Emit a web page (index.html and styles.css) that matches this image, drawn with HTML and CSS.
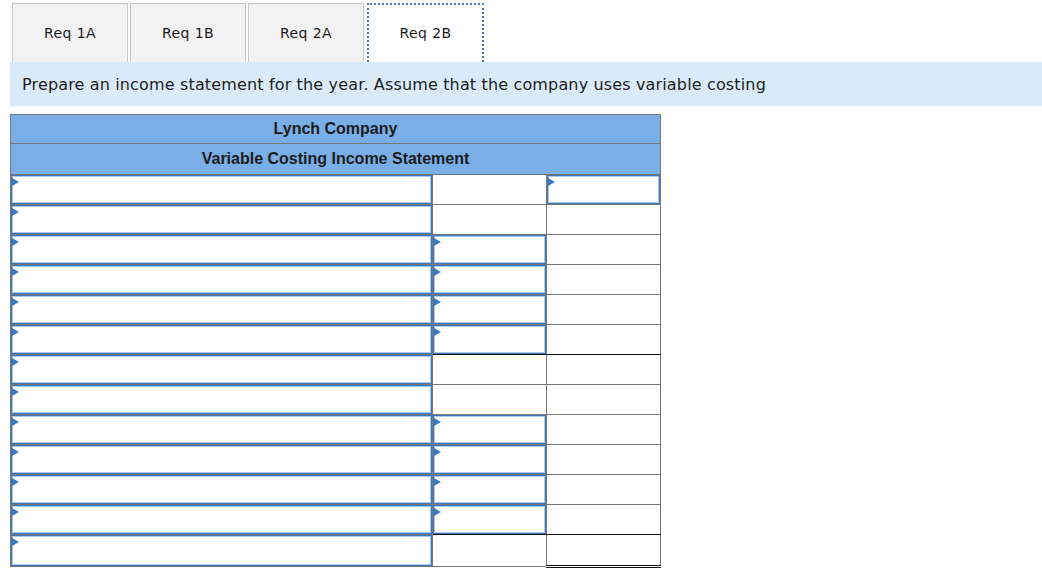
FILE: index.html
```html
<!DOCTYPE html>
<html lang="en">
<head>
  <meta charset="UTF-8">
  <title>Req 2B</title>
  <link rel="stylesheet" href="styles.css">
</head>
<body>
  <div class="tabs">
    <button class="tab">Req 1A</button>
    <button class="tab">Req 1B</button>
    <button class="tab">Req 2A</button>
    <button class="tab active">Req 2B</button>
  </div>
  <div class="prompt">Prepare an income statement for the year. Assume that the company uses variable costing</div>

  <table class="sheet">
    <colgroup>
      <col class="c-label">
      <col class="c-amt">
      <col class="c-amt">
    </colgroup>
    <thead>
      <tr><th colspan="3" class="h1">Lynch Company</th></tr>
      <tr><th colspan="3" class="h2">Variable Costing Income Statement</th></tr>
    </thead>
    <tbody>
      <tr>
        <td><span class="cell"><input type="text"></span></td>
        <td></td>
        <td><span class="cell"><input type="text"></span></td>
      </tr>
      <tr>
        <td><span class="cell"><input type="text"></span></td>
        <td></td>
        <td></td>
      </tr>
      <tr>
        <td><span class="cell"><input type="text"></span></td>
        <td><span class="cell"><input type="text"></span></td>
        <td></td>
      </tr>
      <tr>
        <td><span class="cell"><input type="text"></span></td>
        <td><span class="cell"><input type="text"></span></td>
        <td></td>
      </tr>
      <tr>
        <td><span class="cell"><input type="text"></span></td>
        <td><span class="cell"><input type="text"></span></td>
        <td></td>
      </tr>
      <tr class="subtotal">
        <td><span class="cell"><input type="text"></span></td>
        <td><span class="cell"><input type="text"></span></td>
        <td></td>
      </tr>
      <tr>
        <td><span class="cell"><input type="text"></span></td>
        <td></td>
        <td></td>
      </tr>
      <tr>
        <td><span class="cell"><input type="text"></span></td>
        <td></td>
        <td></td>
      </tr>
      <tr>
        <td><span class="cell"><input type="text"></span></td>
        <td><span class="cell"><input type="text"></span></td>
        <td></td>
      </tr>
      <tr>
        <td><span class="cell"><input type="text"></span></td>
        <td><span class="cell"><input type="text"></span></td>
        <td></td>
      </tr>
      <tr>
        <td><span class="cell"><input type="text"></span></td>
        <td><span class="cell"><input type="text"></span></td>
        <td></td>
      </tr>
      <tr class="subtotal">
        <td><span class="cell"><input type="text"></span></td>
        <td><span class="cell"><input type="text"></span></td>
        <td></td>
      </tr>
      <tr class="total">
        <td><span class="cell"><input type="text"></span></td>
        <td></td>
        <td></td>
      </tr>
    </tbody>
  </table>
</body>
</html>
```

FILE: styles.css
```css
* {
  margin: 0;
  padding: 0;
  box-sizing: border-box;
}

body {
  background: #fff;
  font-family: 'DejaVu Sans', Verdana, sans-serif;
  color: #222;
  padding-left: 10px;
}

.tabs {
  display: flex;
  gap: 2px;
  padding: 3px 0 0 2px;
}

.tab {
  width: 116px;
  height: 59px;
  background: #f2f2f2;
  border: 1px solid #c9c9c9;
  border-bottom: none;
  font-family: 'DejaVu Sans', Verdana, sans-serif;
  font-size: 14px;
  letter-spacing: 0.4px;
  color: #1a1a1a;
  cursor: pointer;
}

.tab.active {
  background: #fff;
  border: 2px dotted #4a78b8;
  border-bottom: none;
  margin-left: 1px;
  width: 117px;
  padding-bottom: 2px;
}

.prompt {
  background: #d9ebf9;
  height: 44px;
  padding: 0 12px;
  display: flex;
  align-items: center;
  font-size: 16px;
  letter-spacing: 0.15px;
  color: #1e1e1e;
}

.sheet {
  margin-top: 8px;
  width: 651px;
  border-collapse: collapse;
  table-layout: fixed;
  font-family: 'Liberation Sans', Arial, sans-serif;
}

.c-label {
  width: 422px;
}

.c-amt {
  width: 114px;
}

.sheet th {
  background: #7aaee6;
  border: 1px solid #777;
  font-size: 16px;
  font-weight: bold;
  color: #1c1c1c;
  text-align: center;
  line-height: 18px;
}

.sheet th.h1 {
  height: 29px;
  padding-bottom: 1px;
}

.sheet th.h2 {
  height: 31px;
}

.sheet td {
  border: 1px solid #777;
  height: 30px;
  padding: 0;
}

.subtotal td:first-child + td,
.subtotal td:last-child {
  border-bottom: 1px solid #111;
}

.total td {
  height: 32px;
}

.total td:last-child {
  border-bottom: 3px double #111;
}

.cell {
  position: relative;
  display: block;
  height: 29px;
}

.total .cell {
  height: 31px;
}

.cell::before {
  content: '';
  position: absolute;
  left: 1px;
  top: 3px;
  border-left: 7px solid #3a78c4;
  border-top: 4.5px solid transparent;
  border-bottom: 4.5px solid transparent;
}

.cell input {
  width: 100%;
  height: 100%;
  border: 1px solid #3f77bd;
  box-shadow: inset 0 0 0 1px #adc9ea;
  background: #fff;
  outline: none;
  font-size: 14px;
  padding: 0 8px;
}
```
